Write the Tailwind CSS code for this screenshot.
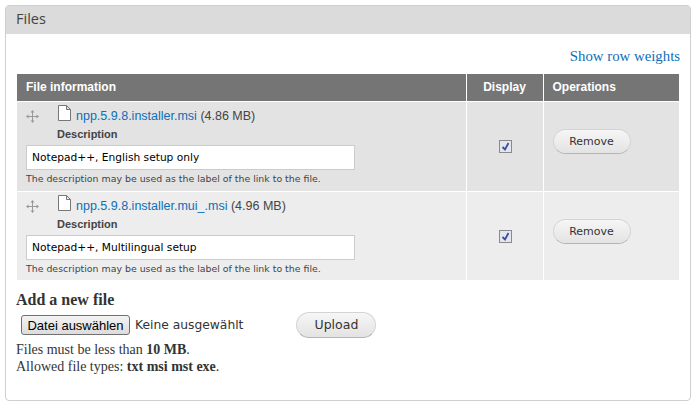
<!DOCTYPE html>
<html lang="en">
<head>
    <meta charset="UTF-8">
    <title>Files</title>
    <script src="https://cdn.jsdelivr.net/npm/@tailwindcss/browser@4"></script>
</head>
<body class="bg-white w-[695px] h-[406px] overflow-hidden font-['Liberation_Serif',serif] text-[#333]">
    <div class="mx-[5px] mt-[5px] w-[686px] h-[396px] border border-[#cfcfcf] rounded-[4px]">
        <div class="h-[28px] bg-[#dbdbdb] pl-[10px] pt-[3px] text-[14.5px] leading-[20px] text-[#444] font-['Open_Sans',sans-serif]">Files</div>

        <div class="h-[40px] pr-[10px] pt-[10px] text-right">
            <a class="text-[14.8px] leading-[18px] text-[#0d6fb8]">Show row weights</a>
        </div>

        <table class="ml-[11px] w-[662px] table-fixed border-collapse font-['Liberation_Sans',sans-serif]">
            <thead>
                <tr class="h-[27px] bg-[#757575] text-white text-[12px] font-bold text-left border-b border-white">
                    <th class="w-[449px] pl-[9px] border-r border-white">File information</th>
                    <th class="w-[77px] text-center border-r border-white">Display</th>
                    <th class="pl-[9px]">Operations</th>
                </tr>
            </thead>
            <tbody>
                <tr class="h-[90px] bg-[#e3e3e3] border-b border-white">
                    <td class="border-r border-white px-[9px] align-top">
                        <div class="flex items-start h-[22px] pt-[4px]">
                            <svg class="mt-[4px] w-[13px] h-[13px]" viewBox="0 0 13 13" fill="#999" stroke="#999"><path fill="none" d="M6.5 2v9M2 6.5h9"/><path stroke="none" d="M6.5 0 8.5 2.5h-4zM6.5 13l2-2.5h-4zM0 6.5l2.5-2v4zM13 6.5l-2.5-2v4z"/></svg>
                            <svg class="ml-[19px] -mt-[1px] w-[13px] h-[16px]" viewBox="0 0 13 16" fill="#fff" stroke="#777"><path d="M.5.5h8l4 4v11H.5zM8.5.5v4h4"/></svg>
                            <span class="ml-[5px] mt-[2px] text-[12.5px] leading-[16px] text-[#444]"><a class="text-[#0d6fb8]">npp.5.9.8.installer.msi</a> (4.86 MB)</span>
                        </div>
                        <div class="ml-[31px] mt-[3px] text-[11px] leading-[14px] font-bold text-[#444]">Description</div>
                        <input class="block mt-[4px] w-[329px] h-[25px] bg-white border border-[#ccc] px-[5px] text-[10.65px] text-black font-['DejaVu_Sans',sans-serif]" value="Notepad++, English setup only">
                        <div class="mt-[3px] text-[9.4px] leading-[12px] text-[#444] font-['DejaVu_Sans',sans-serif]">The description may be used as the label of the link to the file.</div>
                    </td>
                    <td class="border-r border-white text-center">
                        <span class="inline-flex mt-[6px] ml-[1px] w-[13px] h-[13px] border border-[#8a8a8a] bg-[#e4e6ef] items-center justify-center">
                            <svg class="w-[9px] h-[9px]" viewBox="0 0 9 9" fill="none" stroke="#3c4f9c" stroke-width="1.8"><path d="M1.5 5 4 7.5 7.5 1"/></svg>
                        </span>
                    </td>
                    <td class="align-top pl-[9px] pt-[26px]">
                        <button class="w-[78px] h-[25px] rounded-full border border-[#d4d4d4] border-b-[#b5b5b5] bg-gradient-to-b from-[#f6f6f6] to-[#e3e3e3] text-[11px] text-[#333] font-['DejaVu_Sans',sans-serif]">Remove</button>
                    </td>
                </tr>
                <tr class="h-[89px] bg-[#ededed]">
                    <td class="border-r border-white px-[9px] align-top">
                        <div class="flex items-start h-[22px] pt-[4px]">
                            <svg class="mt-[4px] w-[13px] h-[13px]" viewBox="0 0 13 13" fill="#999" stroke="#999"><path fill="none" d="M6.5 2v9M2 6.5h9"/><path stroke="none" d="M6.5 0 8.5 2.5h-4zM6.5 13l2-2.5h-4zM0 6.5l2.5-2v4zM13 6.5l-2.5-2v4z"/></svg>
                            <svg class="ml-[19px] -mt-[1px] w-[13px] h-[16px]" viewBox="0 0 13 16" fill="#fff" stroke="#777"><path d="M.5.5h8l4 4v11H.5zM8.5.5v4h4"/></svg>
                            <span class="ml-[5px] mt-[2px] text-[12.5px] leading-[16px] text-[#444]"><a class="text-[#0d6fb8]">npp.5.9.8.installer.mui_.msi</a> (4.96 MB)</span>
                        </div>
                        <div class="ml-[31px] mt-[3px] text-[11px] leading-[14px] font-bold text-[#444]">Description</div>
                        <input class="block mt-[4px] w-[329px] h-[25px] bg-white border border-[#ccc] px-[5px] text-[10.65px] text-black font-['DejaVu_Sans',sans-serif]" value="Notepad++, Multilingual setup">
                        <div class="mt-[3px] text-[9.4px] leading-[12px] text-[#444] font-['DejaVu_Sans',sans-serif]">The description may be used as the label of the link to the file.</div>
                    </td>
                    <td class="border-r border-white text-center">
                        <span class="inline-flex mt-[6px] ml-[1px] w-[13px] h-[13px] border border-[#8a8a8a] bg-[#e4e6ef] items-center justify-center">
                            <svg class="w-[9px] h-[9px]" viewBox="0 0 9 9" fill="none" stroke="#3c4f9c" stroke-width="1.8"><path d="M1.5 5 4 7.5 7.5 1"/></svg>
                        </span>
                    </td>
                    <td class="align-top pl-[9px] pt-[26px]">
                        <button class="w-[78px] h-[25px] rounded-full border border-[#d4d4d4] border-b-[#b5b5b5] bg-gradient-to-b from-[#f6f6f6] to-[#e3e3e3] text-[11px] text-[#333] font-['DejaVu_Sans',sans-serif]">Remove</button>
                    </td>
                </tr>
            </tbody>
        </table>

        <div class="pl-[10px] pt-[11px]">
            <div class="text-[16px] leading-[18px] font-bold">Add a new file</div>
            <div class="flex items-center h-[26px] mt-[3px]">
                <button class="ml-[5px] w-[109px] h-[20px] rounded-[3px] border border-[#707070] bg-gradient-to-b from-[#f4f4f4] to-[#dcdcdc] text-[13px] text-black font-['Liberation_Sans',sans-serif]">Datei auswählen</button>
                <span class="ml-[5px] text-[12.3px] text-[#333] font-['DejaVu_Sans',sans-serif]">Keine ausgewählt</span>
                <button class="ml-[53px] w-[80px] h-[26px] rounded-full border border-[#d4d4d4] border-b-[#b5b5b5] bg-gradient-to-b from-[#f6f6f6] to-[#e3e3e3] text-[12.5px] text-[#333] font-['DejaVu_Sans',sans-serif]">Upload</button>
            </div>
            <div class="mt-[3px] text-[14px] leading-[17px]">Files must be less than <b>10 MB</b>.</div>
            <div class="text-[14px] leading-[17px]">Allowed file types: <b>txt msi mst exe</b>.</div>
        </div>
    </div>
</body>
</html>
